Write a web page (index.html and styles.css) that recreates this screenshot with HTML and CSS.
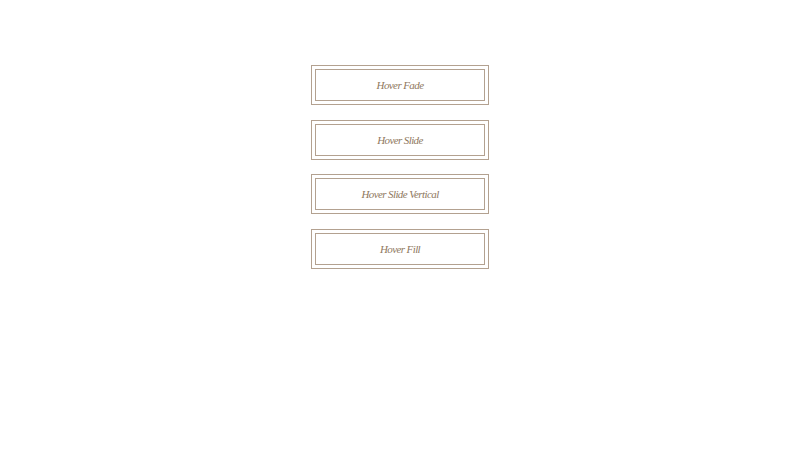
FILE: index.html
```html
<!DOCTYPE html>
<html lang="en">
<head>
    <meta charset="UTF-8">
    <meta name="viewport" content="width=device-width, initial-scale=1.0">
    <title>Hover Buttons</title>
    <link rel="stylesheet" href="styles.css">
</head>
<body>

    <div class="buttons">
        <a href="#" class="btn btn-fade"><span>Hover Fade</span></a>
        <a href="#" class="btn btn-slide"><span>Hover Slide</span></a>
        <a href="#" class="btn btn-slide-vertical"><span>Hover Slide Vertical</span></a>
        <a href="#" class="btn btn-fill"><span>Hover Fill</span></a>
    </div>

</body>
</html>
```
FILE: styles.css
```css
body {
    margin: 0;
    padding: 0;
    background: #fff;
    font-family: "Liberation Serif", "DejaVu Serif", serif;
}
.buttons {
    display: flex;
    flex-direction: column;
    align-items: center;
    gap: 14.5px;
    padding-top: 65px;
}
.btn {
    display: block;
    width: 178px;
    height: 40px;
    box-sizing: border-box;
    padding: 3px;
    border: 1px solid #b3a190;
    text-decoration: none;
    transition: background 0.3s ease;
}
.btn span {
    display: flex;
    align-items: center;
    justify-content: center;
    height: 100%;
    box-sizing: border-box;
    border: 1px solid #b3a190;
    color: #8f7860;
    font-size: 11px;
    font-style: italic;
    letter-spacing: -0.6px;
    transition: color 0.3s ease, background 0.3s ease;
}
.btn:hover span {
    background: #b3a190;
    color: #fff;
}
```
